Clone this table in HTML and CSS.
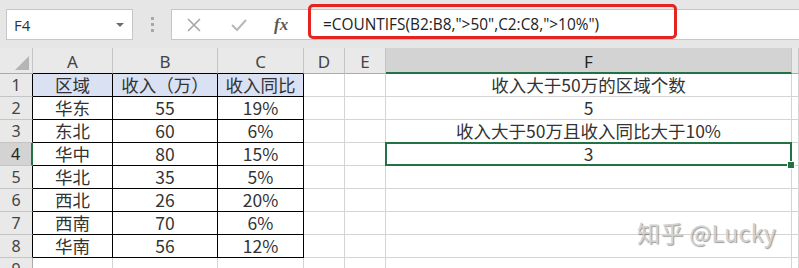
FILE: index.html
```html
<!DOCTYPE html>
<html lang="zh">
<head>
<meta charset="utf-8">
<link rel="stylesheet" href="styles.css">
</head>
<body>
<div class="toolbar">
  <div class="namebox"><span class="ref">F4</span><span class="caret"></span></div>
  <div class="grip"><i></i><i></i><i></i></div>
  <div class="fbar">
    <div class="ficons">
      <svg class="ico" width="16" height="16" viewBox="0 0 16 16"><path d="M2 2L14 14M14 2L2 14" stroke="#a6a6a6" stroke-width="1.6" fill="none"/></svg>
      <svg class="ico" width="18" height="16" viewBox="0 0 18 16"><path d="M2 8L7 13L16 3" stroke="#b8b8b8" stroke-width="2" fill="none"/></svg>
      <span class="fx">fx</span>
    </div>
    <div class="formula">=COUNTIFS(B2:B8,"&gt;50",C2:C8,"&gt;10%")</div>
    <div class="mark"></div>
  </div>
</div>
<div class="sheet">
  <div class="ch corner"><span class="tri"></span></div>
  <div class="ch">A</div><div class="ch">B</div><div class="ch">C</div><div class="ch">D</div><div class="ch">E</div><div class="ch csel">F</div><div class="ch"></div>

  <div class="rh rt">1</div><div class="c t hd">区域</div><div class="c t hd">收入（万）</div><div class="c t hd">收入同比</div><div class="c"></div><div class="c"></div><div class="c">收入大于50万的区域个数</div><div class="c"></div>
  <div class="rh rt">2</div><div class="c t">华东</div><div class="c t">55</div><div class="c t">19%</div><div class="c"></div><div class="c"></div><div class="c">5</div><div class="c"></div>
  <div class="rh rt">3</div><div class="c t">东北</div><div class="c t">60</div><div class="c t">6%</div><div class="c"></div><div class="c"></div><div class="c">收入大于50万且收入同比大于10%</div><div class="c"></div>
  <div class="rh rsel">4</div><div class="c t">华中</div><div class="c t">80</div><div class="c t">15%</div><div class="c"></div><div class="c"></div><div class="c sel">3</div><div class="c"></div>
  <div class="rh rt">5</div><div class="c t">华北</div><div class="c t">35</div><div class="c t">5%</div><div class="c"></div><div class="c"></div><div class="c"></div><div class="c"></div>
  <div class="rh rt">6</div><div class="c t">西北</div><div class="c t">26</div><div class="c t">20%</div><div class="c"></div><div class="c"></div><div class="c"></div><div class="c"></div>
  <div class="rh rt">7</div><div class="c t">西南</div><div class="c t">70</div><div class="c t">6%</div><div class="c"></div><div class="c"></div><div class="c"></div><div class="c"></div>
  <div class="rh rt">8</div><div class="c t">华南</div><div class="c t">56</div><div class="c t">12%</div><div class="c"></div><div class="c"></div><div class="c"></div><div class="c"></div>
  <div class="rh">9</div><div class="c"></div><div class="c"></div><div class="c"></div><div class="c"></div><div class="c"></div><div class="c"></div><div class="c"></div>
  <div class="watermark">知乎 @Lucky</div>
</div>
</body>
</html>
```
FILE: styles.css
```css
* { box-sizing: border-box; }
html, body { margin: 0; padding: 0; }
body {
  width: 799px;
  height: 268px;
  overflow: hidden;
  background: #fff;
  font-family: "Noto Sans CJK SC", "Liberation Sans", sans-serif;
}
.toolbar {
  height: 48px;
  background: #e6e6e6;
  display: flex;
  align-items: flex-start;
  padding-top: 9px;
}
.namebox {
  margin-left: 6px;
  width: 127px;
  height: 31px;
  background: #fff;
  border: 1px solid #c6c6c6;
  display: flex;
  align-items: center;
  justify-content: space-between;
  padding: 0 8px 0 7px;
}
.ref {
  font-family: "Open Sans", "Liberation Sans", sans-serif;
  font-size: 15px;
  color: #333;
}
.caret {
  width: 0; height: 0;
  border-left: 4px solid transparent;
  border-right: 4px solid transparent;
  border-top: 4px solid #6e6e6e;
}
.grip {
  width: 38px;
  height: 31px;
  display: flex;
  flex-direction: column;
  align-items: center;
  justify-content: center;
  gap: 3px;
}
.grip i {
  display: block;
  width: 3px; height: 3px;
  background: #a8a8a8;
}
.fbar {
  flex: 1;
  height: 31px;
  background: #fff;
  border: 1px solid #c6c6c6;
  border-right: none;
  display: flex;
  align-items: center;
  position: relative;
}
.ficons {
  width: 136px;
  display: flex;
  align-items: center;
  padding-left: 14px;
}
.ico { display: block; }
.ficons .ico:first-child { margin-right: 28px; }
.ficons .ico:nth-child(2) { margin-right: 26px; }
.fx {
  font-family: "Liberation Serif", serif;
  font-style: italic;
  font-weight: bold;
  font-size: 17px;
  color: #5a5a5a;
}
.formula {
  padding-left: 15px;
  font-family: "Open Sans", "Liberation Sans", sans-serif;
  font-size: 15.4px;
  color: #222;
}
.mark {
  position: absolute;
  left: 136px;
  top: -6px;
  width: 369px;
  height: 35px;
  border: 3px solid #e3241f;
  border-radius: 5px;
}
.sheet {
  position: relative;
  display: grid;
  grid-template-columns: 33px 80px 105px 86px 41px 41px 406px 7px;
  grid-template-rows: 26px repeat(9, 23px);
  font-size: 17.5px;
  color: #333;
}
.ch {
  background: #e9e9e9;
  border-right: 1px solid #c4c4c4;
  border-bottom: 1px solid #ababab;
  display: flex;
  align-items: center;
  justify-content: center;
  font-family: "Noto Sans", "Liberation Sans", sans-serif;
  font-size: 17px;
  color: #444;
  padding-top: 2px;
}
.corner { position: relative; }
.tri {
  position: absolute;
  right: 3px;
  bottom: 3px;
  width: 0; height: 0;
  border-left: 14px solid transparent;
  border-bottom: 14px solid #b5b5b5;
}
.csel {
  background: #d3d3d3;
  border-bottom: 2px solid #217346;
  color: #222;
}
.rh {
  background: #e9e9e9;
  border-right: 1px solid #ababab;
  border-bottom: 1px solid #c4c4c4;
  display: flex;
  align-items: center;
  justify-content: center;
  font-family: "Noto Sans", "Liberation Sans", sans-serif;
  font-size: 16px;
  color: #444;
}
.rt { border-right-color: #000; }
.rsel {
  background: #d3d3d3;
  border-right: 2px solid #217346;
  color: #222;
}
.c {
  border-right: 1px solid #d4d4d4;
  border-bottom: 1px solid #d4d4d4;
  display: flex;
  align-items: center;
  justify-content: center;
  white-space: nowrap;
  line-height: 1;
}
.t {
  border-right-color: #000;
  border-bottom-color: #000;
}
.sheet .ch:nth-child(2), .sheet .ch:nth-child(3), .sheet .ch:nth-child(4) { border-bottom-color: #000; }
.hd { background: #d9e1f2; }
.sel { position: relative; }
.sel::before {
  content: "";
  position: absolute;
  left: -1px; top: -1px; right: -1px; bottom: -1px;
  border: 2px solid #217346;
}
.sel::after {
  content: "";
  position: absolute;
  right: -4px;
  bottom: -4px;
  width: 6px; height: 6px;
  background: #217346;
  border: 1px solid #fff;
}
.watermark {
  position: absolute;
  left: 637px;
  top: 167px;
  font-family: "Noto Sans CJK SC", "Liberation Sans", sans-serif;
  font-size: 23px;
  letter-spacing: 0.4px;
  color: #d2d2d2;
  text-shadow: 1px 1px 1px rgba(0,0,0,0.4);
  white-space: nowrap;
}
```
